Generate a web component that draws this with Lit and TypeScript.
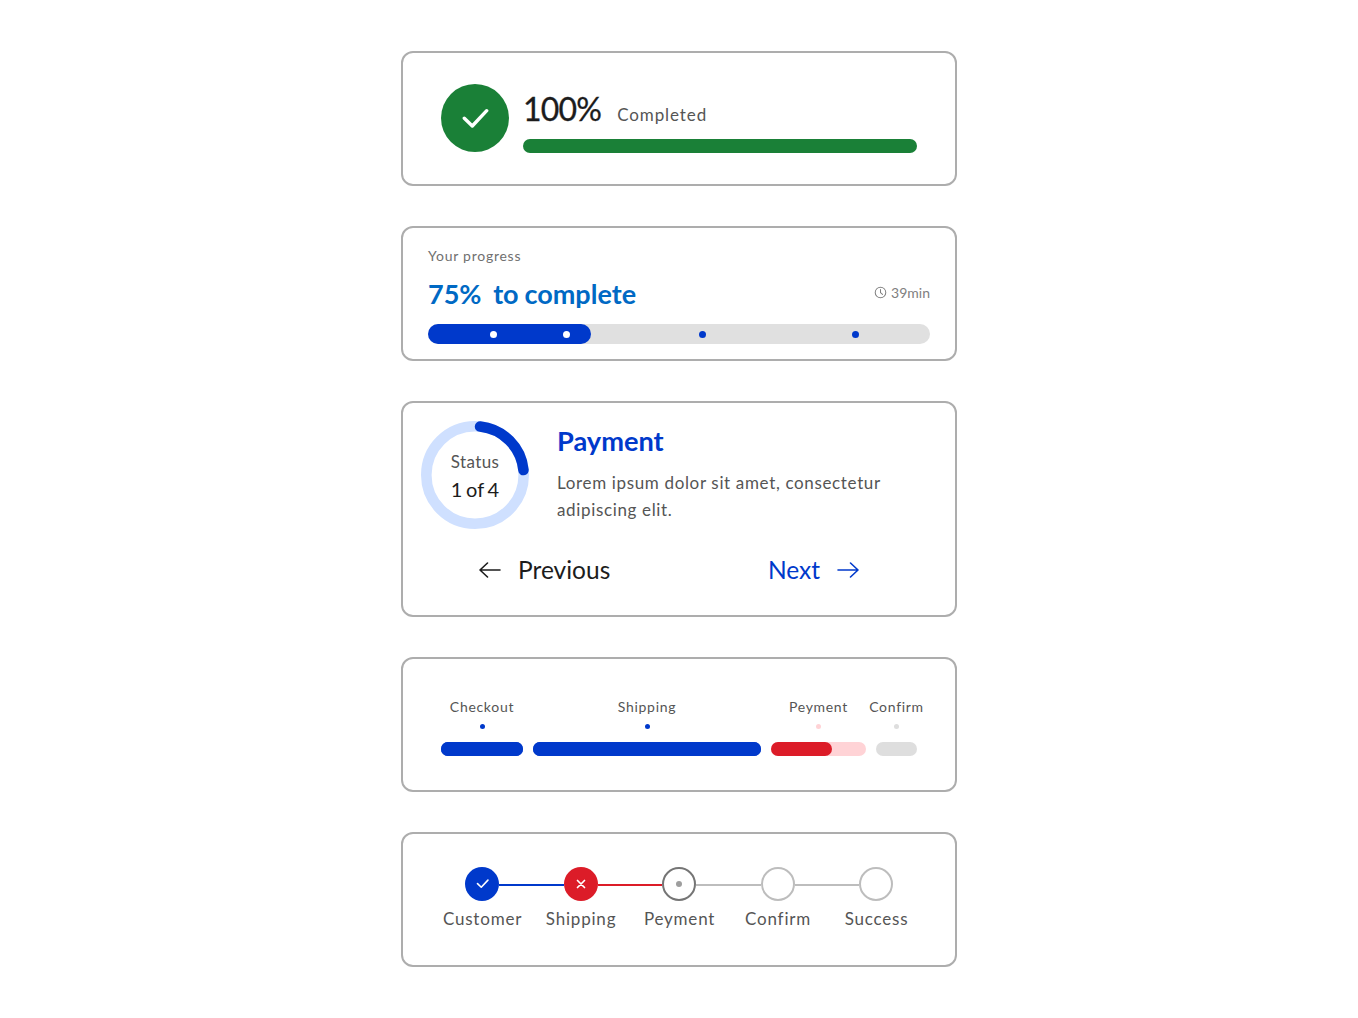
import { LitElement, html, css } from 'lit';
import { customElement } from 'lit/decorators.js';
import { classMap } from 'lit/directives/class-map.js';

const trackDots = [
  { left: 65.5, on: true },
  { left: 138.5, on: true },
  { left: 274.5, on: false },
  { left: 427.5, on: false },
];

const segments = [
  { label: 'Checkout', width: 82, tone: 'blue', fill: 100 },
  { label: 'Shipping', width: 228, tone: 'blue', fill: 100 },
  { label: 'Peyment', width: 95, tone: 'red', fill: 64 },
  { label: 'Confirm', width: 41, tone: 'grey', fill: 0 },
];

const steps = ['Customer', 'Shipping', 'Peyment', 'Confirm', 'Success'];

@customElement('app-root')
export class AppRoot extends LitElement {
  static styles = css`
    :host {
      display: flex;
      flex-direction: column;
      align-items: center;
      gap: 40px;
      padding-top: 51px;
      font-family: Lato, 'Liberation Sans', sans-serif;
      color: #555;
    }
    .card {
      box-sizing: border-box;
      width: 556px;
      height: 135px;
      border: 2px solid #adadad;
      border-radius: 12px;
      background: #fff;
    }
    .card.tall {
      height: 216px;
    }

    /* completed */
    .done {
      display: flex;
      gap: 14px;
      padding: 31px 38px 0;
    }
    .done-circle {
      flex: none;
      display: flex;
      align-items: center;
      justify-content: center;
      width: 68px;
      height: 68px;
      border-radius: 50%;
      background: #1a8037;
    }
    .done-body {
      flex: 1;
    }
    .done-head {
      display: flex;
      align-items: baseline;
      height: 55px;
    }
    .done-num {
      font-size: 32px;
      line-height: 50px;
      letter-spacing: -0.8px;
      color: #1c1c1c;
      -webkit-text-stroke: 0.3px #1c1c1c;
    }
    .done-label {
      margin-left: 16px;
      font-size: 17px;
      letter-spacing: 0.9px;
    }
    .bar-green {
      height: 14px;
      border-radius: 7px;
      background: #1a8037;
    }

    /* your progress */
    .progress {
      padding: 19px 25px 0;
    }
    .small {
      font-size: 14px;
      line-height: 18px;
      letter-spacing: 0.75px;
      color: #707070;
    }
    .progress-head {
      display: flex;
      align-items: center;
      justify-content: space-between;
      height: 40px;
      margin-top: 8px;
    }
    .progress-title {
      font-size: 27px;
      font-weight: 700;
      word-spacing: -0.7px;
      color: #0069c4;
      white-space: pre;
    }
    .time {
      display: flex;
      align-items: center;
      gap: 4px;
      padding-bottom: 2px;
      font-size: 14px;
      color: #808080;
    }
    .track {
      position: relative;
      height: 20px;
      margin-top: 11px;
      border-radius: 10px;
      background: #e0e0e0;
    }
    .track-fill {
      width: 163px;
      height: 20px;
      border-radius: 10px;
      background: #0039cb;
    }
    .track-dot {
      position: absolute;
      top: 6.5px;
      width: 7px;
      height: 7px;
      margin-left: -3.5px;
      border-radius: 50%;
      background: #0039cb;
    }
    .track-dot.on {
      background: #fff;
    }

    /* payment */
    .pay-top {
      display: flex;
      gap: 28px;
      padding: 18px 18px 0;
    }
    .ring {
      position: relative;
      flex: none;
      width: 108px;
      height: 108px;
    }
    .ring svg {
      display: block;
    }
    .ring-text {
      position: absolute;
      inset: 0;
      box-sizing: border-box;
      display: flex;
      flex-direction: column;
      align-items: center;
      justify-content: center;
      padding-top: 1px;
    }
    .ring-status {
      font-size: 17px;
      line-height: 27px;
      letter-spacing: 0.4px;
    }
    .ring-count {
      font-size: 20px;
      line-height: 28px;
      word-spacing: -1.4px;
      color: #1c1c1c;
    }
    .pay-title {
      margin-top: 2px;
      font-size: 27.2px;
      font-weight: 700;
      line-height: 36px;
      color: #0039cb;
    }
    .pay-text {
      width: 340px;
      margin-top: 10px;
      font-size: 17px;
      line-height: 27px;
      letter-spacing: 0.65px;
    }
    .pay-nav {
      display: flex;
      justify-content: space-between;
      padding: 23px 96px 0 76px;
    }
    .nav {
      display: flex;
      align-items: center;
      gap: 17px;
      font-size: 24.5px;
      line-height: 36px;
      color: #1c1c1c;
    }
    .nav.next {
      color: #0039cb;
    }

    /* segments */
    .segments {
      display: flex;
      gap: 10px;
      padding: 39px 38px 0;
    }
    .segment {
      flex: none;
      display: flex;
      flex-direction: column;
      align-items: center;
    }
    .segment-label {
      height: 18px;
      font-size: 14px;
      line-height: 18px;
      letter-spacing: 0.7px;
      white-space: nowrap;
    }
    .segment-dot {
      width: 5px;
      height: 5px;
      margin: 8px 0 13px;
      border-radius: 50%;
    }
    .segment-bar {
      width: 100%;
      height: 14px;
      border-radius: 7px;
    }
    .segment-fill {
      height: 14px;
      border-radius: 7px;
    }
    .dot-blue,
    .fill-blue,
    .bar-blue {
      background: #0039cb;
    }
    .dot-red,
    .bar-red {
      background: #ffd3d6;
    }
    .fill-red {
      background: #dc1c28;
    }
    .dot-grey,
    .bar-grey {
      background: #dedede;
    }

    /* stepper */
    .stepper {
      padding-top: 32.5px;
    }
    .step-line {
      display: flex;
      align-items: center;
      width: 428px;
      margin-left: 62px;
    }
    .bubble {
      flex: none;
      box-sizing: border-box;
      display: flex;
      align-items: center;
      justify-content: center;
      width: 34px;
      height: 34px;
      border: 2px solid #bdbdbd;
      border-radius: 50%;
    }
    .bubble.ok {
      border: none;
      background: #0039cb;
    }
    .bubble.bad {
      border: none;
      background: #dc1c28;
    }
    .bubble.now {
      border-color: #757575;
    }
    .bubble-dot {
      width: 6px;
      height: 6px;
      border-radius: 50%;
      background: #9e9e9e;
    }
    .link {
      flex: 1;
      height: 2px;
      margin-top: 2px;
      background: #bdbdbd;
    }
    .link.ok {
      background: #0039cb;
    }
    .link.bad {
      background: #dc1c28;
    }
    .step-labels {
      display: grid;
      grid-template-columns: repeat(5, 98.5px);
      margin: 6px 0 0 30.3px;
    }
    .step-label {
      font-size: 17px;
      line-height: 24px;
      letter-spacing: 0.8px;
      text-align: center;
    }
  `;

  private clock() {
    return html`<svg width="13" height="13" viewBox="0 0 14 14" fill="none" stroke="#808080" stroke-width="1.1">
      <circle cx="7" cy="7" r="5.7"></circle>
      <path d="M7 3.8V7.2L9.2 9" stroke-linecap="round" stroke-linejoin="round"></path>
    </svg>`;
  }

  private check(size: number, width: number) {
    return html`<svg width=${size} height=${size} viewBox="0 0 28 28" fill="none" stroke="#fff" stroke-width=${width} stroke-linecap="round" stroke-linejoin="round">
      <path d="M3.3 14.3L11.3 22L25.7 6.7"></path>
    </svg>`;
  }

  private arrow(color: string, flip: boolean) {
    return html`<svg width="22" height="16" viewBox="0 0 22 16" fill="none" stroke=${color} stroke-width="1.6" stroke-linecap="round" stroke-linejoin="round">
      <path d=${flip ? 'M21 8H1M8.5 1L1 8L8.5 15' : 'M1 8H21M13.5 1L21 8L13.5 15'}></path>
    </svg>`;
  }

  private renderCompleted() {
    return html`<section class="card done">
      <div class="done-circle">${this.check(28, 3.4)}</div>
      <div class="done-body">
        <div class="done-head">
          <span class="done-num">100%</span>
          <span class="done-label">Completed</span>
        </div>
        <div class="bar-green"></div>
      </div>
    </section>`;
  }

  private renderProgress() {
    return html`<section class="card progress">
      <div class="small">Your progress</div>
      <div class="progress-head">
        <span class="progress-title">75%  to complete</span>
        <span class="time">${this.clock()}39min</span>
      </div>
      <div class="track">
        <div class="track-fill"></div>
        ${trackDots.map(
          (d) => html`<span class=${classMap({ 'track-dot': true, on: d.on })} style="left:${d.left}px"></span>`
        )}
      </div>
    </section>`;
  }

  private renderPayment() {
    // arc runs from about 6deg to 84deg so the round caps stop short of the axes
    const r = 48.7;
    const c = 2 * Math.PI * r;
    return html`<section class="card tall">
      <div class="pay-top">
        <div class="ring">
          <svg width="108" height="108" viewBox="0 0 108 108" fill="none">
            <circle cx="54" cy="54" r=${r} stroke="#cfe0ff" stroke-width="10.6"></circle>
            <circle
              cx="54"
              cy="54"
              r=${r}
              stroke="#0039cb"
              stroke-width="10.6"
              stroke-linecap="round"
              stroke-dasharray="${(c * 78) / 360} ${c}"
              transform="rotate(-84 54 54)"
            ></circle>
          </svg>
          <div class="ring-text">
            <span class="ring-status">Status</span>
            <span class="ring-count">1 of 4</span>
          </div>
        </div>
        <div>
          <div class="pay-title">Payment</div>
          <div class="pay-text">Lorem ipsum dolor sit amet, consectetur adipiscing elit.</div>
        </div>
      </div>
      <div class="pay-nav">
        <div class="nav">${this.arrow('#1c1c1c', true)}Previous</div>
        <div class="nav next">Next${this.arrow('#0039cb', false)}</div>
      </div>
    </section>`;
  }

  private renderSegments() {
    return html`<section class="card segments">
      ${segments.map(
        (s) => html`<div class="segment" style="width:${s.width}px">
          <span class="segment-label">${s.label}</span>
          <span class="segment-dot dot-${s.tone}"></span>
          <div class="segment-bar bar-${s.tone}">
            <div class="segment-fill fill-${s.tone}" style="width:${s.fill}%"></div>
          </div>
        </div>`
      )}
    </section>`;
  }

  private renderStepper() {
    return html`<section class="card stepper">
      <div class="step-line">
        <span class="bubble ok">${this.check(13, 3.4)}</span>
        <span class="link ok"></span>
        <span class="bubble bad">
          <svg width="10" height="10" viewBox="0 0 10 10" fill="none" stroke="#fff" stroke-width="1.7" stroke-linecap="round">
            <path d="M1.5 1.5L8.5 8.5M8.5 1.5L1.5 8.5"></path>
          </svg>
        </span>
        <span class="link bad"></span>
        <span class="bubble now"><span class="bubble-dot"></span></span>
        <span class="link"></span>
        <span class="bubble"></span>
        <span class="link"></span>
        <span class="bubble"></span>
      </div>
      <div class="step-labels">
        ${steps.map((s) => html`<span class="step-label">${s}</span>`)}
      </div>
    </section>`;
  }

  render() {
    return html`
      ${this.renderCompleted()}
      ${this.renderProgress()}
      ${this.renderPayment()}
      ${this.renderSegments()}
      ${this.renderStepper()}
    `;
  }
}
